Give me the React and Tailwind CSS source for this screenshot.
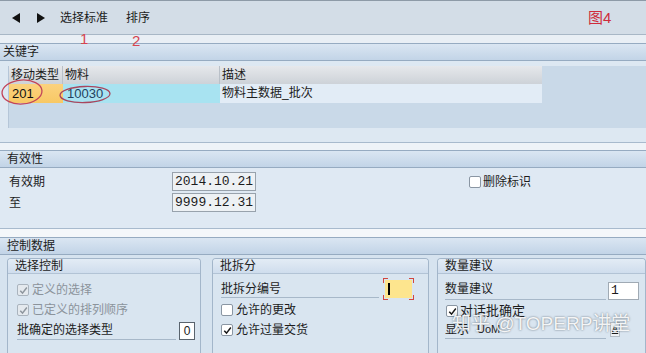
import React from 'react';

const font = "font-['Liberation_Sans','Noto_Sans_CJK_SC',sans-serif]";
const mono = "font-['Liberation_Mono','Noto_Sans_CJK_SC',monospace]";

function Check({ checked, disabled }) {
    return (
        <span
            className={`inline-flex h-[12px] w-[12px] shrink-0 items-center justify-center rounded-[2px] border ${
                disabled ? 'border-[#aab4be] bg-[#e4e9ee]' : 'border-[#8a96a3] bg-white'
            }`}
        >
            {checked && (
                <svg viewBox="0 0 10 10" className="h-[9px] w-[9px]">
                    <path d="M1.4 5.2 L3.9 7.9 L8.7 1.6" fill="none" stroke={disabled ? '#8e969e' : '#1a1a1a'} strokeWidth="1.6" />
                </svg>
            )}
        </span>
    );
}

function SectionHeader({ title, pad = 'pl-[7px]' }) {
    return (
        <div className={`h-[18px] border-y border-[#96abc1] bg-gradient-to-b from-[#dae6f2] to-[#c2d4e7] ${pad} text-[12px] leading-[16px] text-[#1c1c1c]`}>
            {title}
        </div>
    );
}

function Group({ title, className, children }) {
    return (
        <div className={`flex flex-col rounded-t-[4px] border border-b-0 border-[#a3b6ca] bg-[#d9e5f0] ${className}`}>
            <div className="h-[15px] rounded-t-[3px] border-b border-[#b2c3d5] bg-gradient-to-b from-[#e3ecf5] to-[#cfdded] pl-[7px] text-[12px] leading-[14px] text-[#1c1c1c]">
                {title}
            </div>
            <div className="flex flex-1 flex-col">{children}</div>
        </div>
    );
}

function Corner({ pos }) {
    return <span className={`absolute h-[5px] w-[5px] border-[#d2473f] ${pos}`} />;
}

export default function App() {
    return (
        <div className={`relative h-[353px] w-[646px] overflow-hidden bg-[#eef3f8] text-[12px] text-[#1c1c1c] ${font}`}>
            {/* toolbar */}
            <div className="flex h-[35px] items-center border-y border-t-[#8d9aa7] border-b-[#a8b7c6] bg-[#d3dde7] pl-[12px]">
                <svg viewBox="0 0 8 10" className="h-[10px] w-[8px]">
                    <polygon points="8,0 8,10 0,5" fill="#111" />
                </svg>
                <svg viewBox="0 0 8 10" className="ml-[17px] h-[10px] w-[8px]">
                    <polygon points="0,0 0,10 8,5" fill="#111" />
                </svg>
                <span className="ml-[15px]">选择标准</span>
                <span className="ml-[18px]">排序</span>
            </div>
            <div className="h-[8px] bg-[#e9eff5]" />

            {/* 关键字 */}
            <SectionHeader title="关键字" pad="pl-[3px]" />
            <div className="h-[82px] border-b border-[#a8bacd] bg-[#dde8f2] pl-[8px] pt-[5px]">
                <div className="flex h-[62px] flex-col border-l border-[#b5c6d8] bg-[#c9d9e8]">
                    <div className="flex h-[18px] text-[12px] leading-[18px]">
                        <div className="w-[54px] border-r border-[#b9c0c8] bg-gradient-to-b from-[#e6e8eb] to-[#cdd2d8] pl-[2px]">移动类型</div>
                        <div className="w-[157px] border-r border-[#b9c0c8] bg-gradient-to-b from-[#e6e8eb] to-[#cdd2d8] pl-[2px]">物料</div>
                        <div className="w-[322px] bg-gradient-to-b from-[#e6e8eb] to-[#cdd2d8] pl-[2px]">描述</div>
                    </div>
                    <div className="flex h-[19px] text-[13px] leading-[19px]">
                        <div className="w-[54px] bg-gradient-to-b from-[#fbd27e] to-[#f8c864] pl-[3px] text-[#111]">201</div>
                        <div className="w-[157px] bg-[#a8e3f1] pl-[4px] text-[#23415e]">10030</div>
                        <div className="w-[322px] bg-[#e2ecf6] pl-[2px] text-[12px]">物料主数据_批次</div>
                    </div>
                </div>
            </div>
            <div className="h-[7px] bg-[#eef3f8]" />

            {/* 有效性 */}
            <SectionHeader title="有效性" />
            <div className="h-[61px] border-b border-[#a8bacd] bg-[#dfe9f3] pl-[9px] pt-[4px]">
                <div className="flex h-[19px] items-center">
                    <span className="w-[163px]">有效期</span>
                    <span className={`flex h-[19px] w-[84px] items-center border border-[#98a2ac] bg-[#edf1f4] pl-[2px] text-[13px] ${mono}`}>
                        2014.10.21
                    </span>
                    <span className="ml-[213px] flex items-center gap-[2px]">
                        <Check />
                        <span>删除标识</span>
                    </span>
                </div>
                <div className="mt-[2px] flex h-[19px] items-center">
                    <span className="w-[163px]">至</span>
                    <span className={`flex h-[19px] w-[84px] items-center border border-[#98a2ac] bg-[#edf1f4] pl-[2px] text-[13px] ${mono}`}>
                        9999.12.31
                    </span>
                </div>
            </div>
            <div className="h-[8px] bg-[#f4f7fa]" />

            {/* 控制数据 */}
            <SectionHeader title="控制数据" />
            <div className="flex h-[120px] bg-[#d6e3ef] pl-[7px] pt-[3px]">
                <Group title="选择控制" className="w-[194px]">
                    <div className="mt-[6px] flex h-[20px] items-center gap-[3px] pl-[9px] text-[#8b939b]">
                        <Check checked disabled />
                        <span>定义的选择</span>
                    </div>
                    <div className="flex h-[20px] items-center gap-[3px] pl-[9px] text-[#8b939b]">
                        <Check checked disabled />
                        <span>已定义的排列顺序</span>
                    </div>
                    <div className="flex h-[20px] items-end pl-[9px]">
                        <span className="h-[18px] w-[159px] border-b border-[#a7b8c9] leading-[17px]">批确定的选择类型</span>
                        <span className="ml-[3px] flex h-[18px] w-[16px] items-center justify-center border border-[#59636d] bg-white">0</span>
                    </div>
                </Group>
                <Group title="批拆分" className="ml-[11px] w-[217px]">
                    <div className="mt-[4px] flex h-[22px] items-center pl-[8px]">
                        <span className="h-[17px] w-[158px] border-b border-[#a7b8c9] leading-[16px]">批拆分编号</span>
                        <span className="relative ml-[6px] flex h-[18px] w-[27px] items-center bg-[#fde58e] pl-[3px]">
                            <span className="h-[12px] w-[2px] bg-black" />
                            <Corner pos="-left-[2px] -top-[2px] border-l border-t" />
                            <Corner pos="-right-[2px] -top-[2px] border-r border-t" />
                            <Corner pos="-bottom-[2px] -left-[2px] border-b border-l" />
                            <Corner pos="-bottom-[2px] -right-[2px] border-b border-r" />
                        </span>
                    </div>
                    <div className="flex h-[20px] items-center gap-[3px] pl-[8px]">
                        <Check />
                        <span>允许的更改</span>
                    </div>
                    <div className="flex h-[20px] items-center gap-[3px] pl-[8px]">
                        <Check checked />
                        <span>允许过量交货</span>
                    </div>
                </Group>
                <Group title="数量建议" className="ml-[8px] flex-1">
                    <div className="mt-[7px] flex h-[19px] items-end pl-[7px]">
                        <span className="h-[18px] w-[161px] border-b border-[#a7b8c9] leading-[15px]">数量建议</span>
                        <span className="ml-[2px] flex h-[18px] w-[31px] items-center border border-[#a0aab4] bg-white pl-[2px] font-['Liberation_Mono',monospace] text-[13px]">
                            1
                        </span>
                    </div>
                    <div className="mt-[3px] flex h-[16px] items-center gap-[2px] pl-[8px] text-[13px]">
                        <Check checked />
                        <span>对话批确定</span>
                    </div>
                    <div className="flex h-[20px] items-end pl-[7px]">
                        <span className="flex h-[18px] w-[161px] items-center gap-[8px] border-b border-[#a7b8c9]">
                            <span>显示</span>
                            <span className="text-[11px]">UoM</span>
                        </span>
                        <span className="mb-[2px] ml-[4px] flex h-[15px] w-[10px] items-center justify-center border border-[#b3bcc5] bg-[#eef2f5] text-[9px] font-bold underline">
                            A
                        </span>
                    </div>
                </Group>
            </div>

            {/* annotations */}
            <span className="absolute left-[80px] top-[31px] text-[15px] leading-none text-[#d64550]">1</span>
            <span className="absolute left-[132px] top-[33px] text-[15px] leading-none text-[#d64550]">2</span>
            <span className="absolute left-[588px] top-[10px] text-[15px] leading-none text-[#cf2b3b]">图4</span>
            <svg className="pointer-events-none absolute left-0 top-0 h-[353px] w-[646px]" viewBox="0 0 646 353">
                <ellipse cx="22" cy="92" rx="20" ry="12" fill="none" stroke="#c2445a" strokeWidth="1.3" transform="rotate(-4 22 92)" />
                <ellipse cx="85" cy="94.5" rx="25" ry="8" fill="none" stroke="#a8465e" strokeWidth="1.3" transform="rotate(-2 85 94.5)" />
            </svg>
            <span className="pointer-events-none absolute left-[452px] top-[314px] whitespace-nowrap text-[19px] leading-none text-white/90 [text-shadow:0_0_2px_rgba(40,50,60,0.7)]">
                知乎 @TOPERP讲堂
            </span>
        </div>
    );
}
